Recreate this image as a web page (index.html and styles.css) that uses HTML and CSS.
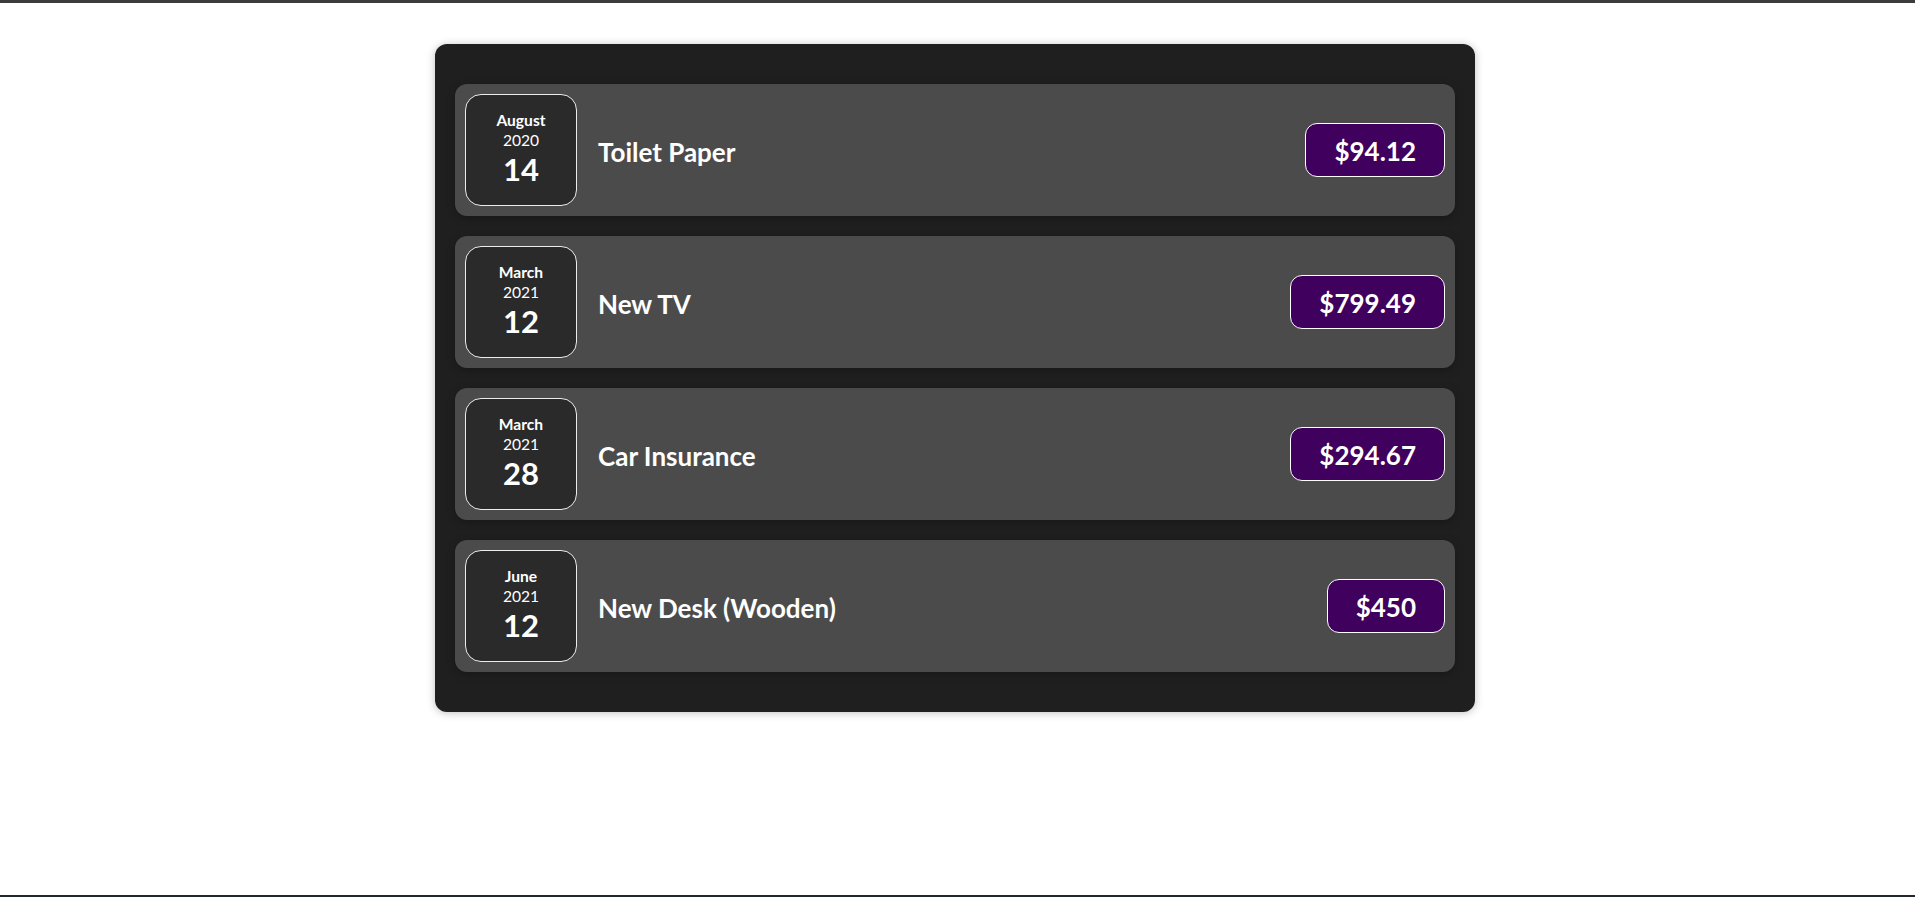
FILE: index.html
```html
<html>
    <head>
        <link rel="stylesheet" href="styles.css">
    </head>
    <body>
        <div class="expenses">
            <div class="expense-item">
                <div class="expense-date">
                    <div class="expense-date__month">August</div>
                    <div class="expense-date__year">2020</div>
                    <div class="expense-date__day">14</div>
                </div>
                <div class="expense-item__description">
                    <h2>Toilet Paper</h2>
                    <div class="expense-item__price">$94.12</div>
                </div>
            </div>
            <div class="expense-item">
                <div class="expense-date">
                    <div class="expense-date__month">March</div>
                    <div class="expense-date__year">2021</div>
                    <div class="expense-date__day">12</div>
                </div>
                <div class="expense-item__description">
                    <h2>New TV</h2>
                    <div class="expense-item__price">$799.49</div>
                </div>
            </div>
            <div class="expense-item">
                <div class="expense-date">
                    <div class="expense-date__month">March</div>
                    <div class="expense-date__year">2021</div>
                    <div class="expense-date__day">28</div>
                </div>
                <div class="expense-item__description">
                    <h2>Car Insurance</h2>
                    <div class="expense-item__price">$294.67</div>
                </div>
            </div>
            <div class="expense-item">
                <div class="expense-date">
                    <div class="expense-date__month">June</div>
                    <div class="expense-date__year">2021</div>
                    <div class="expense-date__day">12</div>
                </div>
                <div class="expense-item__description">
                    <h2>New Desk (Wooden)</h2>
                    <div class="expense-item__price">$450</div>
                </div>
            </div>
        </div>
    </body>
</html>
```

FILE: styles.css
```css
html {
    background-color: white;
}
body {
    margin: 0;
    min-height: 100vh;
    box-sizing: border-box;
    border-top: 3px solid #3c3c3c;
    border-bottom: 2px solid #22262e;
    padding: 41px 5px 0 0;
    font-family: Lato, 'Noto Sans', sans-serif;
}
.expenses {
    width: 1040px;
    margin: 0 auto;
    padding: 20px;
    box-sizing: border-box;
    background-color: #1f1f1f;
    border-radius: 12px;
    box-shadow: 0 1px 8px rgba(0, 0, 0, 0.25);
}
.expense-item {
    display: flex;
    align-items: center;
    padding: 10px;
    margin: 20px 0;
    background-color: #4b4b4b;
    border-radius: 12px;
    box-shadow: 0 2px 8px rgba(0, 0, 0, 0.25);
}
.expense-date {
    display: flex;
    flex-direction: column;
    align-items: center;
    justify-content: center;
    width: 112px;
    height: 112px;
    box-sizing: border-box;
    padding-bottom: 2px;
    border: 1px solid #ececec;
    background-color: #2a2a2a;
    color: white;
    border-radius: 16px;
}
.expense-date__month {
    font-size: 15.6px;
    font-weight: bold;
    line-height: 20px;
}
.expense-date__year {
    font-size: 15.6px;
    line-height: 20px;
}
.expense-date__day {
    font-size: 31px;
    font-weight: bold;
    line-height: 38px;
}
.expense-item__description {
    display: flex;
    align-items: center;
    flex: 1;
}
.expense-item h2 {
    flex: 1;
    margin: 0 21px;
    padding-top: 3px;
    font-size: 26px;
    color: white;
}
.expense-item__price {
    font-size: 26px;
    font-weight: bold;
    line-height: 32px;
    color: white;
    background-color: #40005d;
    border: 1px solid white;
    padding: 11px 28px 9px;
    border-radius: 12px;
}
```
